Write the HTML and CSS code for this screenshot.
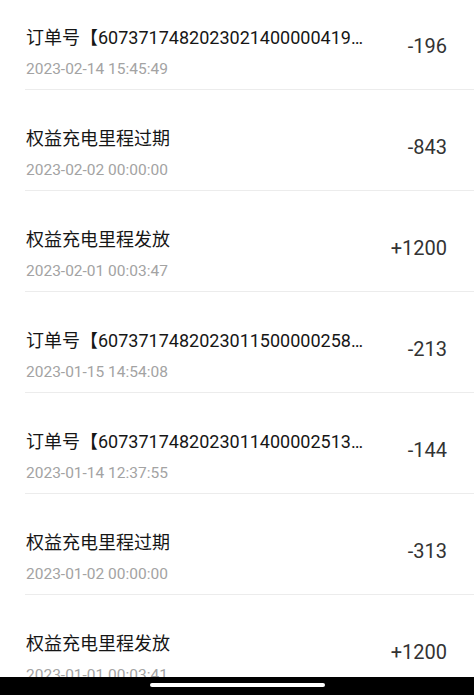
FILE: index.html
```html
<!DOCTYPE html>
<html lang="zh-CN">
<head>
    <meta charset="UTF-8">
    <meta name="viewport" content="width=device-width, initial-scale=1.0">
    <title>里程明细</title>
    <link rel="stylesheet" href="styles.css">
</head>
<body>
    <ul class="record-list">
        <li class="record">
            <div class="info">
                <p class="title">订单号【6073717482023021400000419…</p>
                <p class="time">2023-02-14 15:45:49</p>
            </div>
            <span class="amount">-196</span>
        </li>
        <li class="record">
            <div class="info">
                <p class="title">权益充电里程过期</p>
                <p class="time">2023-02-02 00:00:00</p>
            </div>
            <span class="amount">-843</span>
        </li>
        <li class="record">
            <div class="info">
                <p class="title">权益充电里程发放</p>
                <p class="time">2023-02-01 00:03:47</p>
            </div>
            <span class="amount">+1200</span>
        </li>
        <li class="record">
            <div class="info">
                <p class="title">订单号【6073717482023011500000258…</p>
                <p class="time">2023-01-15 14:54:08</p>
            </div>
            <span class="amount">-213</span>
        </li>
        <li class="record">
            <div class="info">
                <p class="title">订单号【6073717482023011400002513…</p>
                <p class="time">2023-01-14 12:37:55</p>
            </div>
            <span class="amount">-144</span>
        </li>
        <li class="record">
            <div class="info">
                <p class="title">权益充电里程过期</p>
                <p class="time">2023-01-02 00:00:00</p>
            </div>
            <span class="amount">-313</span>
        </li>
        <li class="record">
            <div class="info">
                <p class="title">权益充电里程发放</p>
                <p class="time">2023-01-01 00:03:41</p>
            </div>
            <span class="amount">+1200</span>
        </li>
    </ul>

    <!-- 系统导航条 -->
    <div class="home-bar">
        <span class="home-indicator"></span>
    </div>
</body>
</html>
```

FILE: styles.css
```css
*{
    margin: 0px;
    padding: 0px;
}

body{
    background: #fff;
    font-family: Roboto, "Noto Sans CJK SC", sans-serif;
    overflow: hidden;
}

.record-list{
    list-style: none;
    margin-top: -11px;
}

.record{
    display: flex;
    align-items: flex-start;
    margin-left: 25px;
    padding: 37px 27px 10px 1px;
    border-bottom: 1px solid #ececec;
}

.record .info{
    flex: 1;
    min-width: 0;
}

.record .title{
    font-size: 18px;
    line-height: 24px;
    color: #161616;
    white-space: nowrap;
}

.record .time{
    margin-top: 9px;
    font-size: 15.5px;
    line-height: 20px;
    color: #a3a3a3;
}

.record .amount{
    margin-top: 6px;
    font-size: 20px;
    line-height: 28px;
    color: #333;
}

.home-bar{
    position: fixed;
    left: 0;
    right: 0;
    bottom: 0;
    height: 18px;
    background: #000;
    display: flex;
    justify-content: center;
    padding-top: 6px;
    box-sizing: border-box;
}

.home-indicator{
    width: 175px;
    height: 4px;
    border-radius: 2px;
    background: #fff;
}
```
